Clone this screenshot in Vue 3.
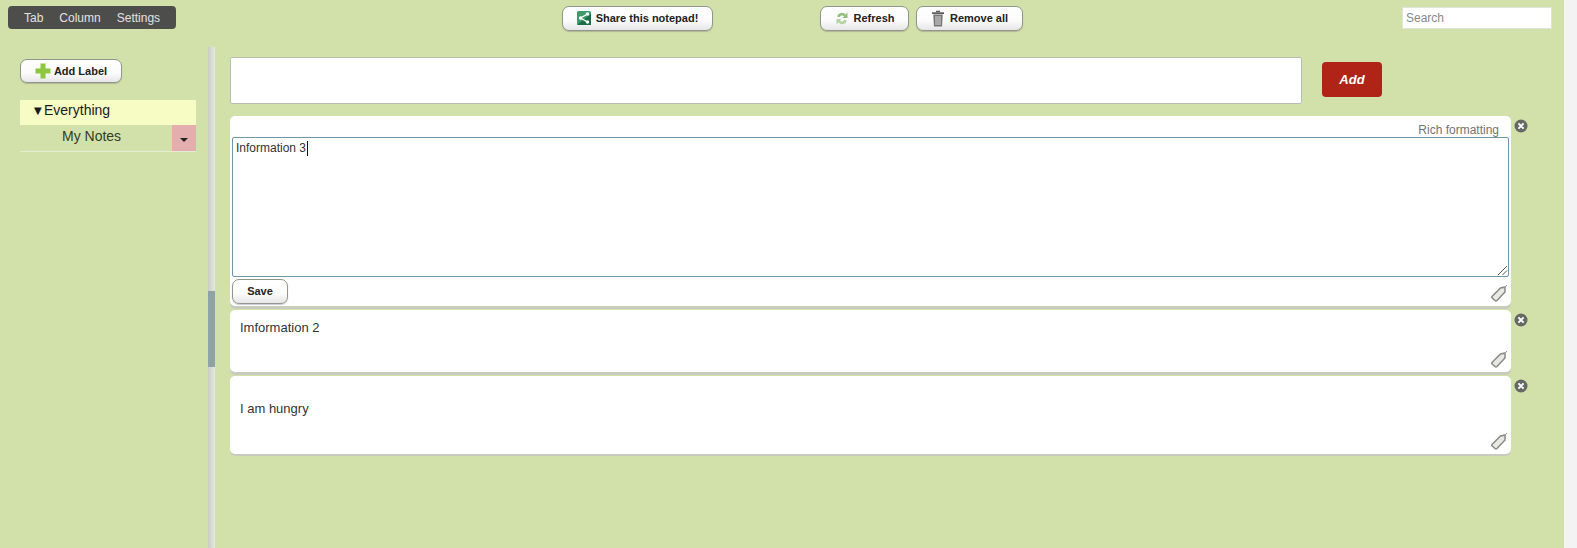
<script setup>
const menu = ['Tab', 'Column', 'Settings']
const tagPath = 'M2 12.5 L10.5 4 L15 3 L15 8 L7 16.5 Q6 17.5 5 16.5 L2 13.8 Q1.3 13.1 2 12.5 Z'
</script>

<template>
  <div class="window">
    <div class="page">
      <header class="top">
        <nav class="menu">
          <span v-for="m in menu" :key="m" class="menu-item">{{ m }}</span>
        </nav>
        <button class="btn share">
          <svg width="14" height="14" viewBox="0 0 14 14" class="ico">
            <rect width="14" height="14" rx="1.5" fill="#3f9a6c" />
            <path d="M0 14 L14 3 V14 Z" fill="#1c6e48" />
            <path d="M10.5 3 L3.5 7 L10.5 11" fill="none" stroke="#fff" stroke-width="1.4" />
            <circle cx="10.5" cy="3" r="1.7" fill="#fff" />
            <circle cx="3.5" cy="7" r="1.7" fill="#fff" />
            <circle cx="10.5" cy="11" r="1.7" fill="#fff" />
          </svg>
          Share this notepad!
        </button>
        <button class="btn refresh">
          <svg width="14" height="15" viewBox="0 0 14 15" class="ico">
            <path d="M2 5.5 A5 5 0 0 1 10.5 3.4 L12.5 1.5 V7 H7.5 L9.2 5.2 A3 3 0 0 0 4.5 6.2 Z" fill="#8fc07a" />
            <path d="M12 9.5 A5 5 0 0 1 3.5 11.6 L1.5 13.5 V8 H6.5 L4.8 9.8 A3 3 0 0 0 9.5 8.8 Z" fill="#b3d3a2" />
          </svg>
          Refresh
        </button>
        <button class="btn remove">
          <svg width="14" height="17" viewBox="0 0 14 17" class="ico">
            <path d="M5 2 V0.8 H9 V2 M1 2.2 H13 V4 H1 Z" fill="#5c5c5c" />
            <path d="M2.2 4.5 H11.8 L11 16.5 H3 Z" fill="#777" />
            <path d="M5 6 V15 M7 6 V15 M9 6 V15" stroke="#e2e2e2" stroke-width="0.9" />
          </svg>
          Remove all
        </button>
        <input class="search" placeholder="Search" />
      </header>

      <div class="body">
        <aside class="side">
          <button class="btn add-label">
            <svg width="16" height="16" viewBox="0 0 16 16" class="ico">
              <path d="M5.5 0.5 H10.5 V5.5 H15.5 V10.5 H10.5 V15.5 H5.5 V10.5 H0.5 V5.5 H5.5 Z" fill="#8ec73f" />
            </svg>
            Add Label
          </button>
          <div class="label-all"><span class="tri">▼</span>Everything</div>
          <div class="label-row">
            <span class="label-name">My Notes</span>
            <span class="label-menu"><i class="caret"></i></span>
          </div>
        </aside>

        <div class="splitter"><div class="thumb"></div></div>

        <main class="main">
          <div class="new-row">
            <div class="new-input"></div>
            <button class="add">Add</button>
          </div>

          <div class="note-row first">
            <section class="card editing">
              <div class="rich">Rich formatting</div>
              <div class="editor">
                <span>Information 3</span><i class="cursor"></i>
                <svg class="grip" width="11" height="11" viewBox="0 0 11 11">
                  <path d="M1 10 L10 1 M5.5 10 L10 5.5" stroke="#555" stroke-width="1" />
                </svg>
              </div>
              <div class="card-foot">
                <button class="btn save">Save</button>
                <svg class="tag" width="18" height="19" viewBox="0 0 18 19">
                  <path :d="tagPath" fill="#e9e9e4" stroke="#8a8a84" stroke-width="1.5" />
                  <path d="M14 4.5 L17 1" stroke="#999" stroke-width="1" />
                </svg>
              </div>
            </section>
            <svg class="close" width="14" height="14" viewBox="0 0 14 14">
              <circle cx="7" cy="7" r="6.5" fill="#666963" />
              <path d="M4.4 4.4 L9.6 9.6 M9.6 4.4 L4.4 9.6" stroke="#fff" stroke-width="2" />
            </svg>
          </div>

          <div class="note-row">
            <section class="card note-two">
              <p class="note-text">Imformation 2</p>
              <svg class="tag" width="18" height="19" viewBox="0 0 18 19">
                <path :d="tagPath" fill="#e9e9e4" stroke="#8a8a84" stroke-width="1.5" />
                <path d="M14 4.5 L17 1" stroke="#999" stroke-width="1" />
              </svg>
            </section>
            <svg class="close" width="14" height="14" viewBox="0 0 14 14">
              <circle cx="7" cy="7" r="6.5" fill="#666963" />
              <path d="M4.4 4.4 L9.6 9.6 M9.6 4.4 L4.4 9.6" stroke="#fff" stroke-width="2" />
            </svg>
          </div>

          <div class="note-row">
            <section class="card note-three">
              <p class="note-text">I am hungry</p>
              <svg class="tag" width="18" height="19" viewBox="0 0 18 19">
                <path :d="tagPath" fill="#e9e9e4" stroke="#8a8a84" stroke-width="1.5" />
                <path d="M14 4.5 L17 1" stroke="#999" stroke-width="1" />
              </svg>
            </section>
            <svg class="close" width="14" height="14" viewBox="0 0 14 14">
              <circle cx="7" cy="7" r="6.5" fill="#666963" />
              <path d="M4.4 4.4 L9.6 9.6 M9.6 4.4 L4.4 9.6" stroke="#fff" stroke-width="2" />
            </svg>
          </div>
        </main>
      </div>
    </div>
    <div class="scrollbar"></div>
  </div>
</template>

<style>
html, body { margin: 0; overflow: hidden; background: #f3f3f3; }
</style>

<style scoped>
.window {
  display: flex;
  width: 1577px;
  height: 548px;
  font-family: "Liberation Sans", Arial, sans-serif;
  overflow: hidden;
}
.page {
  width: 1564px;
  background: #d2e1a9;
  display: flex;
  flex-direction: column;
}
.scrollbar { flex: 1; background: #f3f3f3; }

.top {
  height: 47px;
  flex: none;
  display: flex;
  align-items: flex-start;
  padding: 6px 0 0 8px;
  box-sizing: border-box;
}
.menu {
  width: 168px;
  height: 23px;
  box-sizing: border-box;
  background: #4d4e4c;
  border-radius: 4px;
  color: #e2e2e2;
  font-size: 12px;
  display: flex;
  gap: 16px;
  align-items: center;
  padding-left: 16px;
}
.btn {
  display: inline-flex;
  align-items: center;
  justify-content: center;
  box-sizing: border-box;
  font-family: "Liberation Sans", Arial, sans-serif;
  font-size: 11px;
  font-weight: bold;
  color: #222;
  height: 25px;
  padding: 0 0 1px;
  border: 1px solid #94948e;
  border-radius: 7px;
  background: linear-gradient(#ffffff, #fbfbfb 60%, #e6e6e8);
  box-shadow: 0 1px 1px rgba(90, 90, 90, 0.3);
}
.ico { margin-right: 5px; flex: none; }
.share { width: 151px; margin: 0 0 0 386px; }
.refresh { width: 89px; margin: 0 0 0 107px; }
.remove { width: 107px; margin: 0 0 0 7px; }
.search {
  width: 150px;
  height: 22px;
  box-sizing: border-box;
  margin: 1px 0 0 379px;
  border: 1px solid #dfe3d8;
  background: #fff;
  padding: 0 3px;
  font: 12px "Liberation Sans", Arial, sans-serif;
  outline: none;
}
.search::placeholder { color: #8a8a8a; opacity: 1; }

.body { flex: 1; display: flex; min-height: 0; }
.side {
  width: 208px;
  flex: none;
  box-sizing: border-box;
  padding: 12px 0 0 20px;
}
.add-label { width: 102px; height: 24px; display: flex; margin-bottom: 17px; }
.add-label .ico { margin-right: 3px; margin-left: 0; }
.label-all {
  width: 176px;
  height: 25px;
  background: #f6fcc4;
  font-size: 14px;
  line-height: 21px;
  color: #1a1a1a;
  padding-left: 14px;
  box-sizing: border-box;
  display: flex;
}
.tri { font-size: 10px; width: 10px; line-height: 22px; font-family: "DejaVu Sans", sans-serif; }
.label-row {
  width: 176px;
  height: 27px;
  display: flex;
  justify-content: space-between;
  border-bottom: 1px solid #e6ebd6;
  box-sizing: border-box;
}
.label-name { font-size: 14px; line-height: 22px; color: #333d22; padding-left: 42px; }
.label-menu {
  width: 24px;
  height: 26px;
  background: #e5aeae;
  display: flex;
  align-items: center;
  justify-content: center;
}
.caret {
  width: 0;
  height: 0;
  border-left: 4px solid transparent;
  border-right: 4px solid transparent;
  border-top: 4px solid #222;
  margin-top: 3px;
}

.splitter {
  width: 7px;
  flex: none;
  background: linear-gradient(90deg, #c9cdc4, #e6e7e2);
  box-sizing: border-box;
}
.thumb { height: 76px; margin-top: 244px; background: #8ea3a3; }

.main { flex: 1; padding: 10px 0 0 15px; min-width: 0; }
.new-row { display: flex; align-items: flex-start; height: 59px; }
.new-input {
  width: 1072px;
  height: 47px;
  box-sizing: border-box;
  background: #fff;
  border: 1px solid #b9bfae;
  border-radius: 2px;
}
.add {
  width: 60px;
  height: 35px;
  margin: 5px 0 0 20px;
  padding: 0;
  border: none;
  border-radius: 4px;
  background: #b02418;
  color: #fff;
  font: italic bold 13px "Liberation Sans", Arial, sans-serif;
}
.note-row { display: flex; align-items: flex-start; margin-bottom: 4px; }
.card {
  position: relative;
  width: 1281px;
  box-sizing: border-box;
  background: #fff;
  border-radius: 5px;
  box-shadow: 0 3px 0 #c9cbbf;
}
.note-three { box-shadow: 0 2px 0 #c9cbbf; }
.close { margin: 3px 0 0 3px; flex: none; }
.editing { height: 190px; padding: 21px 2px 0 2px; }
.rich {
  position: absolute;
  right: 12px;
  top: 7px;
  font-size: 12px;
  color: #737373;
}
.editor {
  position: relative;
  height: 140px;
  box-sizing: border-box;
  border: 1px solid #6f97a8;
  border-radius: 2px;
  padding: 3px;
  font-size: 12px;
  line-height: 14px;
  color: #333;
  display: flex;
  align-items: flex-start;
}
.cursor { width: 1px; height: 15px; background: #111; margin-left: 1px; }
.grip { position: absolute; right: 0; bottom: 0; }
.card-foot { display: flex; justify-content: space-between; padding-top: 2px; }
.save { width: 56px; height: 25px; font-size: 11px; }
.tag { position: absolute; right: 3px; bottom: 3px; }
.note-two { height: 62px; padding: 10px 10px; }
.note-three { height: 78px; padding: 25px 10px 0; }
.note-text { margin: 0; font-size: 13px; line-height: 15px; color: #333; }
</style>
